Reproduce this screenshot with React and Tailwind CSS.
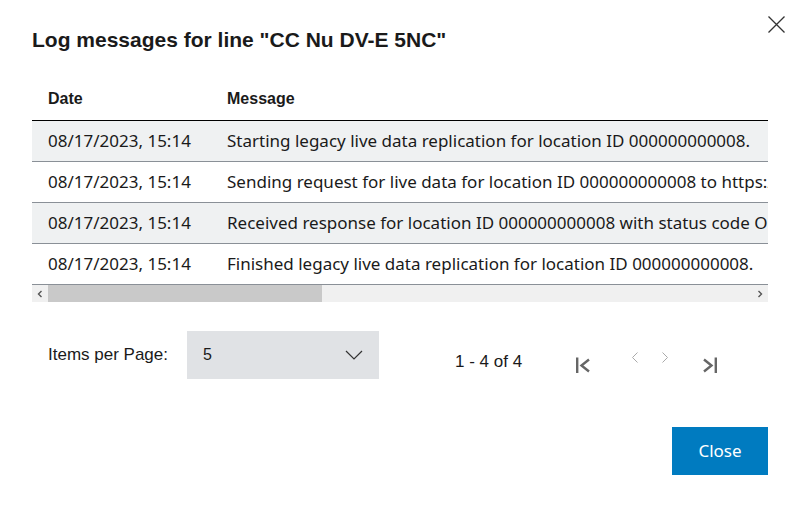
import React from "react";

const rows = [
  "Starting legacy live data replication for location ID 000000000008.",
  "Sending request for live data for location ID 000000000008 to https://live-data.example.com/api/v1/replication",
  "Received response for location ID 000000000008 with status code OK (200).",
  "Finished legacy live data replication for location ID 000000000008.",
];

const cond = { fontFamily: '"Liberation Sans Narrow", "Liberation Sans", sans-serif' };

export default function App() {
  return (
    <div className="w-[800px] h-[507px] bg-white relative text-[#1a1a1a]" style={{ fontFamily: '"Noto Sans", sans-serif' }}>
      <button className="absolute left-[766px] top-[14px] w-[20px] h-[20px] flex items-center justify-center">
        <svg width="19" height="19" viewBox="0 0 19 19" fill="none" stroke="#333" strokeWidth="1.3">
          <path d="M1.5 1.5 L17.5 17.5 M17.5 1.5 L1.5 17.5" />
        </svg>
      </button>
      <div className="pl-[32px] pr-[32px] pt-[26px]">
        <h1 className="text-[21px] font-bold leading-[28px]" style={cond}>
          Log messages for line "CC Nu DV-E 5NC"
        </h1>
        <div className="mt-[24px] w-[736px] overflow-hidden">
          <div className="flex h-[43px] items-center border-b border-black text-[16px] font-bold" style={cond}>
            <div className="w-[195px] pl-[16px] shrink-0">Date</div>
            <div>Message</div>
          </div>
          {rows.map((m, i) => (
            <div
              key={i}
              className={`flex h-[41px] items-center border-b border-[#8a9097] text-[17px] whitespace-nowrap ${i % 2 === 0 ? "bg-[#eff1f2]" : "bg-white"}`}
            >
              <div className="w-[195px] pl-[16px] shrink-0">08/17/2023, 15:14</div>
              <div>{m}</div>
            </div>
          ))}
          <div className="flex h-[17px] bg-[#f0f0f0] items-center">
            <div className="w-[16px] flex items-center justify-center">
              <svg width="6" height="8" viewBox="0 0 6 8" fill="none" stroke="#555" strokeWidth="1.4">
                <path d="M4.5 1 L1.5 4 L4.5 7" />
              </svg>
            </div>
            <div className="w-[274px] h-full bg-[#c9c9c9]" />
            <div className="flex-1" />
            <div className="w-[16px] flex items-center justify-center">
              <svg width="6" height="8" viewBox="0 0 6 8" fill="none" stroke="#555" strokeWidth="1.4">
                <path d="M1.5 1 L4.5 4 L1.5 7" />
              </svg>
            </div>
          </div>
        </div>
        <div className="flex items-start mt-[29px]">
          <div className="flex items-center h-[48px] pl-[16px] w-[155px] text-[17px]" style={cond}>
            Items per Page:
          </div>
          <div className="w-[192px] h-[48px] bg-[#e0e2e5] flex items-center justify-between pl-[16px] pr-[16px]">
            <span className="text-[16px]" style={{ fontFamily: '"Liberation Sans", sans-serif' }}>5</span>
            <svg width="18" height="10" viewBox="0 0 18 10" fill="none" stroke="#333" strokeWidth="1.2">
              <path d="M1 1 L9 9 L17 1" />
            </svg>
          </div>
          <div className="flex items-center h-[62px] ml-[76px] w-[67px] text-[17px] whitespace-nowrap" style={cond}>
            1 - 4 of 4
          </div>
          <div className="flex items-start ml-[53px]">
            <svg className="mt-[26px]" width="16" height="16" viewBox="0 0 16 16" fill="none" stroke="#666" strokeWidth="2.4">
              <path d="M2.2 0.5 L2.2 16 M14 2.5 L6.5 8.5 L14 14.5" />
            </svg>
            <svg className="mt-[21px] ml-[40px]" width="8" height="11" viewBox="0 0 8 11" fill="none" stroke="#aaa" strokeWidth="1">
              <path d="M6.5 0.5 L1.5 5.5 L6.5 10.5" />
            </svg>
            <svg className="mt-[21px] ml-[22px]" width="8" height="11" viewBox="0 0 8 11" fill="none" stroke="#aaa" strokeWidth="1">
              <path d="M1.5 0.5 L6.5 5.5 L1.5 10.5" />
            </svg>
            <svg className="mt-[26px] ml-[33px]" width="16" height="16" viewBox="0 0 16 16" fill="none" stroke="#666" strokeWidth="2.4">
              <path d="M13.8 0.5 L13.8 16 M2 2.5 L9.5 8.5 L2 14.5" />
            </svg>
          </div>
        </div>
        <div className="flex justify-end mt-[34px]">
          <button className="w-[96px] h-[48px] bg-[#007bc0] text-white text-[17px]">Close</button>
        </div>
      </div>
    </div>
  );
}
